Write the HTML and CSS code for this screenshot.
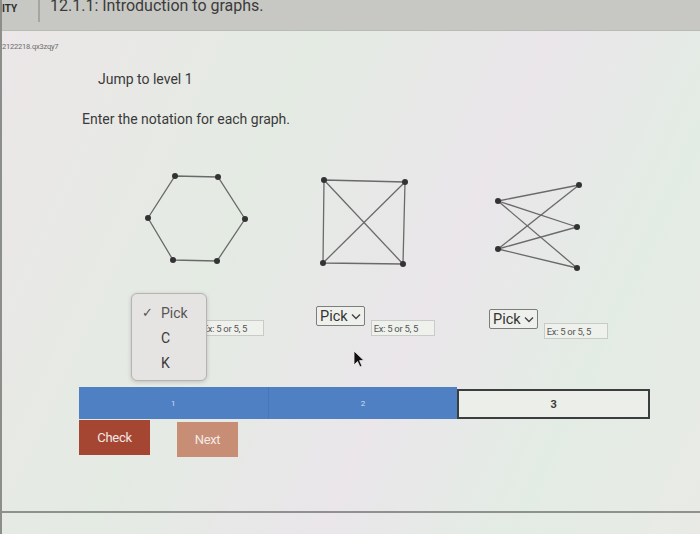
FILE: index.html
```html
<!DOCTYPE html>
<html>
<head>
<meta charset="utf-8">
<link rel="stylesheet" href="styles.css">
</head>
<body>
<div class="page">
  <header class="topbar">
    <span class="brand">ITY</span>
    <span class="divider"></span>
    <span class="title">12.1.1: Introduction to graphs.</span>
  </header>
  <main class="content">
    <div class="qid">2122218.qx3zqy7</div>
    <div class="jump">Jump to level 1</div>
    <div class="prompt">Enter the notation for each graph.</div>
    <svg class="graphs" width="569" height="110" viewBox="79 163 569 110">
      <g stroke="#6a6a6a" stroke-width="1.3" fill="none">
        <polygon points="175,174 218,175 245,217 217,259 173,258 148,216"/>
        <polygon points="324,178 405,180 403,262 323,261"/>
        <line x1="324" y1="178" x2="403" y2="262"/>
        <line x1="405" y1="180" x2="323" y2="261"/>
        <line x1="498" y1="199" x2="579" y2="183"/>
        <line x1="498" y1="199" x2="577" y2="225"/>
        <line x1="498" y1="199" x2="577" y2="266"/>
        <line x1="498" y1="247" x2="579" y2="183"/>
        <line x1="498" y1="247" x2="577" y2="225"/>
        <line x1="498" y1="247" x2="577" y2="266"/>
      </g>
      <g fill="#333">
        <circle cx="175" cy="174" r="3"/><circle cx="218" cy="175" r="3"/>
        <circle cx="245" cy="217" r="3"/><circle cx="217" cy="259" r="3"/>
        <circle cx="173" cy="258" r="3"/><circle cx="148" cy="216" r="3"/>
        <circle cx="324" cy="178" r="3"/><circle cx="405" cy="180" r="3"/>
        <circle cx="403" cy="262" r="3"/><circle cx="323" cy="261" r="3"/>
        <circle cx="498" cy="199" r="3"/><circle cx="498" cy="247" r="3"/>
        <circle cx="579" cy="183" r="3"/><circle cx="577" cy="225" r="3"/>
        <circle cx="577" cy="266" r="3"/>
      </g>
    </svg>
    <div class="controls">
      <div class="cell c1">
        <span class="select hidden">Pick <svg width="10" height="7" viewBox="0 0 10 7"><path d="M1 1.5 L5 5.5 L9 1.5" stroke="#444" stroke-width="1.4" fill="none"/></svg></span>
        <span class="input">Ex: 5 or 5, 5</span>
      </div>
      <div class="cell c2">
        <span class="select">Pick <svg width="10" height="7" viewBox="0 0 10 7"><path d="M1 1.5 L5 5.5 L9 1.5" stroke="#444" stroke-width="1.4" fill="none"/></svg></span>
        <span class="input">Ex: 5 or 5, 5</span>
      </div>
      <div class="cell c3">
        <span class="select">Pick <svg width="10" height="7" viewBox="0 0 10 7"><path d="M1 1.5 L5 5.5 L9 1.5" stroke="#444" stroke-width="1.4" fill="none"/></svg></span>
        <span class="input">Ex: 5 or 5, 5</span>
      </div>
    </div>
    <div class="progress">
      <div class="seg done">1</div>
      <div class="seg done">2</div>
      <div class="seg current">3</div>
    </div>
    <div class="actions">
      <button class="btn check">Check</button>
      <button class="btn next">Next</button>
    </div>
    <div class="rule"></div>
  </main>

  <div class="menu">
    <div class="opt"><span class="tick">✓</span><span>Pick</span></div>
    <div class="opt"><span class="tick"></span><span>C</span></div>
    <div class="opt"><span class="tick"></span><span>K</span></div>
  </div>
  <svg class="cursor" width="12" height="18" viewBox="0 0 12 18">
    <path d="M1 1 L1 15 L4.5 11.5 L7 17 L9 16 L6.6 10.6 L11 10.6 Z" fill="#111" stroke="#eee" stroke-width="0.8"/>
  </svg>
</div>
</body>
</html>
```

FILE: styles.css
```css
* { box-sizing: border-box; }
html, body { margin: 0; padding: 0; }
body {
  width: 700px;
  height: 534px;
  overflow: hidden;
  font-family: Roboto, "Liberation Sans", Arial, sans-serif;
  color: #3a3a3a;
  background: #e9ebe5;
}
.page {
  position: relative;
  width: 700px;
  height: 534px;
  border-left: 2px solid #8c8e8a;
  background: linear-gradient(115deg, #ece6e8 0%, #e4ebe3 35%, #eae6ea 60%, #e3ece4 80%, #e9eae6 100%);
}
.topbar {
  display: flex;
  align-items: flex-start;
  height: 31px;
  background: #c7c8c3;
  border-bottom: 1px solid #b9bbb6;
}
.brand {
  font-size: 10px;
  font-weight: 700;
  color: #2f2f2f;
  margin-top: 3px;
  width: 36px;
}
.divider {
  width: 2px;
  height: 22px;
  background: #a5a6a2;
  margin-right: 10px;
}
.title {
  font-size: 16px;
  color: #3b3b3b;
  line-height: 16px;
  margin-top: -2px;
}
.content {
  display: flex;
  flex-direction: column;
  align-items: flex-start;
}
.qid {
  font-size: 7.5px;
  color: #6d6d6d;
  margin-top: 11px;
  letter-spacing: -0.2px;
}
.jump {
  font-size: 14px;
  color: #3a3a3a;
  margin-top: 20px;
  margin-left: 96px;
}
.prompt {
  font-size: 14px;
  color: #3a3a3a;
  margin-top: 24px;
  margin-left: 80px;
}
.graphs {
  display: block;
  margin-top: 38px;
  margin-left: 77px;
}
.controls {
  display: grid;
  grid-template-columns: 189px 189px 191px;
  margin-left: 77px;
  margin-top: 31px;
  height: 81px;
}
.cell {
  display: flex;
  align-items: flex-start;
  gap: 6px;
}
.c1 { padding-left: 66px; }
.c2 { padding-left: 48px; }
.c3 { padding-left: 32px; padding-top: 3px; }
.select {
  display: inline-flex;
  align-items: center;
  gap: 3px;
  height: 20px;
  padding: 0 3px 0 3px;
  border: 1px solid #7d7d7d;
  border-radius: 2px;
  background: #eef0ec;
  font-size: 14.5px;
  color: #333;
}
.select.hidden { visibility: hidden; }
.input {
  display: inline-flex;
  align-items: center;
  width: 64px;
  height: 16px;
  margin-top: 14px;
  padding-left: 2px;
  border: 1px solid #c9cbc6;
  background: #eff1ec;
  font-size: 9.5px;
  color: #555;
  letter-spacing: -0.3px;
  white-space: nowrap;
}
.progress {
  display: flex;
  margin-left: 77px;
  width: 571px;
  height: 32px;
}
.seg {
  flex: 1;
  display: flex;
  align-items: center;
  justify-content: center;
  font-size: 8px;
}
.seg.done {
  background: #4f80c3;
  color: #d2def0;
}
.seg.done + .seg.done { border-left: 1px solid #4577bb; }
.seg.current {
  margin-top: 2px;
  border: 2px solid #3b3d3f;
  background: #ecefe9;
  color: #3a3a3a;
  font-size: 11px;
  font-weight: 700;
}
.actions {
  display: flex;
  align-items: flex-start;
  gap: 27px;
  margin-left: 77px;
  margin-top: 1px;
}
.btn {
  border: none;
  font-family: Roboto, "Liberation Sans", Arial, sans-serif;
  font-size: 13px;
  color: #f3e9e6;
  letter-spacing: -0.3px;
  height: 35px;
}
.check {
  width: 71px;
  background: #a54633;
}
.next {
  width: 61px;
  margin-top: 2px;
  background: #c88e75;
}
.rule {
  width: 698px;
  height: 2px;
  background: #8e918d;
  margin-top: 54px;
}
.menu {
  position: absolute;
  left: 129px;
  top: 293px;
  width: 76px;
  height: 88px;
  border: 1px solid #b7b3b4;
  border-radius: 6px;
  background: #e6e4e3;
  box-shadow: 0 1px 4px rgba(0,0,0,0.18);
  padding-top: 9px;
}
.opt {
  display: flex;
  height: 25px;
  padding-left: 10px;
  font-size: 14px;
  color: #3a3a3a;
  line-height: 20px;
}
.opt:first-child { color: #555; }
.tick {
  width: 19px;
  font-size: 13px;
  color: #555;
}
.cursor {
  position: absolute;
  left: 351px;
  top: 350px;
}
```
